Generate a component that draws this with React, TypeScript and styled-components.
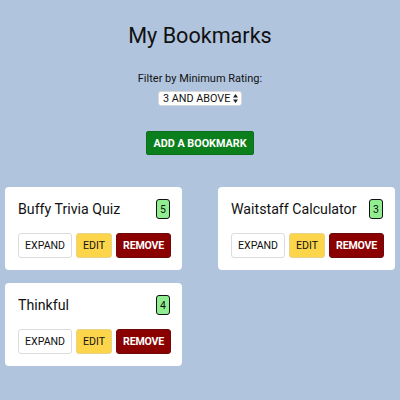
import React, { useState } from "react";
import styled, { createGlobalStyle } from "styled-components";

const GlobalStyle = createGlobalStyle`
  *, *::before, *::after {
    box-sizing: border-box;
  }
  html, body {
    margin: 0;
    padding: 0;
    background: #b0c4de;
    font-family: Roboto, "Liberation Sans", sans-serif;
    color: #111;
  }
`;

const Page = styled.main`
  min-height: 400px;
  padding-top: 23px;
  display: flex;
  flex-direction: column;
  align-items: center;
`;

const Title = styled.h1`
  margin: 0;
  font-size: 21.6px;
  font-weight: 400;
  line-height: 26px;
`;

const FilterLabel = styled.label`
  margin-top: 23px;
  font-size: 11px;
  line-height: 13px;
`;

const SelectWrap = styled.div`
  position: relative;
  margin-top: 6px;
  display: flex;
`;

const Select = styled.select`
  display: block;
  appearance: none;
  -webkit-appearance: none;
  height: 15px;
  width: 84px;
  padding: 0 10px 0 4px;
  border: 1px solid #d8d8d8;
  border-radius: 3px;
  background: #fff;
  font-family: inherit;
  font-size: 10.8px;
  line-height: 13px;
  color: #111;
  text-transform: uppercase;
`;

const Arrows = styled.svg`
  position: absolute;
  right: 4px;
  top: 3px;
  pointer-events: none;
`;

const AddButton = styled.button`
  margin-top: 25px;
  height: 24px;
  padding: 0 6px;
  border: 1px solid #0c6e18;
  border-radius: 2px;
  background: #0b7f1c;
  color: #fff;
  font-family: inherit;
  font-weight: 700;
  font-size: 10.8px;
  text-transform: uppercase;
`;

const CardList = styled.section`
  align-self: stretch;
  margin-top: 32px;
  padding: 0 5px;
  display: flex;
  flex-wrap: wrap;
  justify-content: space-between;
  row-gap: 13px;
`;

const Card = styled.article`
  width: 177px;
  padding: 12px 12px 12px 13px;
  background: #fff;
  border-radius: 4px;
`;

const CardHeader = styled.div`
  display: flex;
  align-items: center;
  justify-content: space-between;
  height: 20px;
  margin-bottom: 14px;
`;

const CardTitle = styled.h2`
  margin: 0;
  font-size: 14.2px;
  font-weight: 400;
  white-space: nowrap;
`;

const Rating = styled.span`
  width: 14px;
  height: 20px;
  display: flex;
  align-items: center;
  justify-content: center;
  background: #90ee90;
  border: 1px solid #111;
  border-radius: 3px;
  font-size: 10.5px;
`;

const Actions = styled.div`
  display: flex;
  gap: 4px;
`;

const variants = {
  plain: { bg: "#fff", border: "#dcdcdc", color: "#111", weight: 400, spacing: 0 },
  edit: { bg: "#fdd54a", border: "#e9d28a", color: "#111", weight: 400, spacing: 0 },
  danger: { bg: "#8b0000", border: "#6e0a0a", color: "#fff", weight: 700, spacing: -0.2 },
};

const ActionButton = styled.button<{ $variant: keyof typeof variants }>`
  height: 25px;
  padding: 0 6px;
  border: 1px solid ${(p) => variants[p.$variant].border};
  border-radius: 3px;
  background: ${(p) => variants[p.$variant].bg};
  color: ${(p) => variants[p.$variant].color};
  font-family: inherit;
  font-size: 10.6px;
  font-weight: ${(p) => variants[p.$variant].weight};
  letter-spacing: ${(p) => variants[p.$variant].spacing}px;
  text-transform: uppercase;
`;

const bookmarks = [
  { id: 1, title: "Buffy Trivia Quiz", rating: 5 },
  { id: 2, title: "Waitstaff Calculator", rating: 3 },
  { id: 3, title: "Thinkful", rating: 4 },
];

export default function App() {
  const [minRating, setMinRating] = useState("3");

  return (
    <Page>
      <GlobalStyle />
      <Title>My Bookmarks</Title>
      <FilterLabel htmlFor="rating">Filter by Minimum Rating:</FilterLabel>
      <SelectWrap>
        <Select
          id="rating"
          value={minRating}
          onChange={(e) => setMinRating(e.target.value)}
        >
          {[1, 2, 3, 4, 5].map((n) => (
            <option key={n} value={n}>
              {n} and above
            </option>
          ))}
        </Select>
        <Arrows width="5" height="9" viewBox="0 0 5 9">
          <path d="M2.5 0L5 3.4H0z M2.5 9L0 5.6H5z" fill="#222" />
        </Arrows>
      </SelectWrap>
      <AddButton>Add a bookmark</AddButton>
      <CardList>
        {bookmarks
          .filter((b) => b.rating >= Number(minRating))
          .map((b) => (
            <Card key={b.id}>
              <CardHeader>
                <CardTitle>{b.title}</CardTitle>
                <Rating>{b.rating}</Rating>
              </CardHeader>
              <Actions>
                <ActionButton $variant="plain">Expand</ActionButton>
                <ActionButton $variant="edit">Edit</ActionButton>
                <ActionButton $variant="danger">Remove</ActionButton>
              </Actions>
            </Card>
          ))}
      </CardList>
    </Page>
  );
}
